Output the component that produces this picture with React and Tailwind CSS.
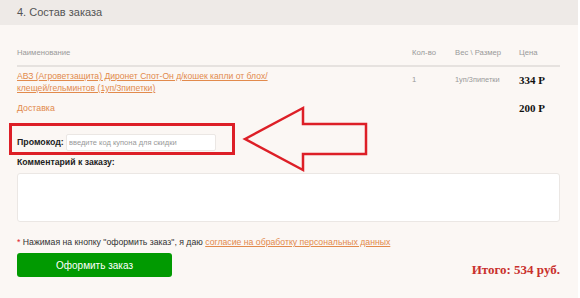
export default function App() {
  const serif = { fontFamily: '"Liberation Serif", "Times New Roman", serif' };
  return (
    <div className="w-[580px] h-[298px] bg-white overflow-hidden" style={{ fontFamily: '"Liberation Sans", Arial, sans-serif' }}>
      <div className="w-[578px] h-[298px] bg-[#fbf7f4] relative">
        <div className="h-[25px] bg-[#eeeae7] pl-[17px] flex items-center text-[11px] text-[#555]">
          4. Состав заказа
        </div>
        <div className="pl-[17px] pr-[18px]">
          <div className="grid grid-cols-[395px_43px_64px_1fr] mt-[22px] pb-[6px] border-b-2 border-[#e6e2df] text-[7.7px] leading-[12px] text-[#999]">
            <div>Наименование</div>
            <div>Кол-во</div>
            <div>Вес \ Размер</div>
            <div>Цена</div>
          </div>
          <div className="grid grid-cols-[395px_43px_64px_1fr] pt-[3px] items-start">
            <a href="#" className="text-[8.6px] leading-[12px] text-[#e28a4c] underline">
              АВЗ (Агроветзащита) Диронет Спот-Он д/кошек капли от блох/<br />клещей/гельминтов (1уп/3пипетки)
            </a>
            <div className="text-[7.7px] leading-[12px] text-[#999] mt-[4px]">1</div>
            <div className="text-[7.4px] leading-[12px] text-[#999] mt-[4px]">1уп/3пипетки</div>
            <div className="text-[11px] leading-[12px] font-bold text-[#111] mt-[4px]" style={serif}>334 Р</div>
          </div>
          <div className="grid grid-cols-[395px_43px_64px_1fr] mt-[8px]">
            <div className="text-[8.8px] leading-[12px] text-[#e28a4c]">Доставка</div>
            <div></div>
            <div></div>
            <div className="text-[11px] leading-[12px] font-bold text-[#111]" style={serif}>200 Р</div>
          </div>
          <div className="flex items-center mt-[20px] h-[17px]">
            <span className="text-[8.8px] font-bold text-[#222] w-[49px]">Промокод:</span>
            <input
              className="w-[150px] h-[17px] bg-white border border-[#ebe7e4] rounded-[2px] px-[2px] text-[7.5px] text-[#333] placeholder:text-[#999] outline-none"
              placeholder="введите код купона для скидки"
            />
          </div>
          <div className="mt-[5px] text-[8.7px] leading-[12px] font-bold text-[#222]">Комментарий к заказу:</div>
          <textarea className="block mt-[5px] w-full h-[49px] bg-white border border-[#ebe7e4] rounded-[3px] resize-none outline-none"></textarea>
          <div className="mt-[14px] text-[8.7px] leading-[12px] text-[#333]">
            <span className="text-[#e0202a]">*</span> Нажимая на кнопку "оформить заказ", я даю{" "}
            <a href="#" className="text-[#e28a4c] underline">согласие на обработку персональных данных</a>
          </div>
          <div className="flex justify-between items-end mt-[5px]">
            <button className="w-[155px] h-[24px] bg-[#019a01] rounded-[3px] text-white text-[10px]">Оформить заказ</button>
            <div className="text-[13px] leading-[14px] font-bold text-[#c9302c]" style={serif}>
              Итого: 534 руб.
            </div>
          </div>
        </div>
        <div className="absolute left-[9px] top-[123px] w-[226px] h-[32px] border-[3px] border-[#dd1f27]"></div>
        <svg className="absolute left-0 top-0" width="580" height="298" viewBox="0 0 580 298" fill="none">
          <polygon points="245,139 303,108 303,124 366,124 366,154 303,154 303,170" stroke="#dd1f27" strokeWidth="2.5" strokeLinejoin="miter" fill="none" />
        </svg>
      </div>
    </div>
  );
}
